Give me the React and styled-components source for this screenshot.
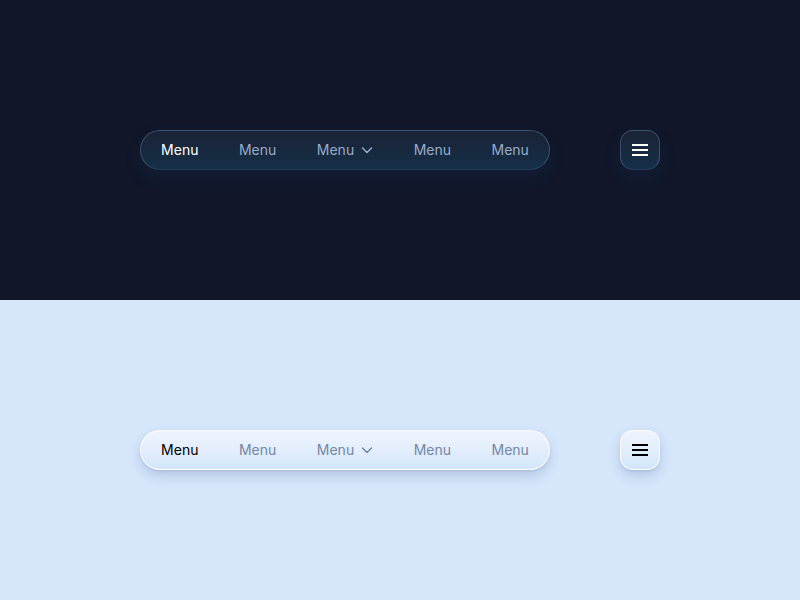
import React from "react";
import styled, { createGlobalStyle, css } from "styled-components";

const Global = createGlobalStyle`
  html, body { margin: 0; padding: 0; }
  body { font-family: Inter, "Noto Sans", sans-serif; -webkit-font-smoothing: antialiased; }
`;

const Section = styled.section`
  height: 300px;
  display: flex;
  align-items: center;
  justify-content: center;
  gap: 70px;
  background: ${(p) => (p.$dark ? "#111729" : "#d6e6fb")};
`;

const surface = (dark) =>
  dark
    ? css`
        background: linear-gradient(180deg, #1a2236 0%, #172a40 60%, #15304a 100%);
        border: 1px solid rgba(170, 190, 225, 0.26);
        border-bottom-color: rgba(120, 150, 190, 0.18);
        box-shadow: 0 8px 16px rgba(20, 60, 110, 0.18);
      `
    : css`
        background: linear-gradient(180deg, #eef4fe 0%, #e3eefc 50%, #d2e6fa 100%);
        border: 1px solid rgba(255, 255, 255, 0.9);
        box-shadow: 0 6px 12px rgba(60, 90, 150, 0.22), 0 1px 2px rgba(60, 90, 150, 0.15);
      `;

const Pill = styled.nav`
  height: 40px;
  box-sizing: border-box;
  display: flex;
  align-items: center;
  gap: 40.5px;
  padding: 0 20px;
  border-radius: 20px;
  ${(p) => surface(p.$dark)}
`;

const Item = styled.a`
  display: flex;
  align-items: center;
  gap: 7px;
  font-size: 14px;
  line-height: 20px;
  font-weight: 400;
  cursor: pointer;
  color: ${(p) =>
    p.$dark ? (p.$active ? "#ffffff" : "#98abca") : p.$active ? "#000000" : "#7487a5"};
`;

const IconButton = styled.button`
  width: 40px;
  height: 40px;
  box-sizing: border-box;
  padding: 0;
  border-radius: 13px;
  display: flex;
  align-items: center;
  justify-content: center;
  cursor: pointer;
  color: ${(p) => (p.$dark ? "#ffffff" : "#000000")};
  ${(p) => surface(p.$dark)}
`;

const Chevron = () => (
  <svg width="12" height="12" viewBox="0 0 12 12" fill="none">
    <path d="M1.5 4l4.5 4.5L10.5 4" stroke="currentColor" strokeWidth="1.5" strokeLinecap="round" strokeLinejoin="round" />
  </svg>
);

const Burger = () => (
  <svg width="16" height="12" viewBox="0 0 16 12" fill="none">
    <path d="M0 1h16M0 6h16M0 11h16" stroke="currentColor" strokeWidth="2" />
  </svg>
);

const Bar = ({ dark }) => (
  <Section $dark={dark}>
    <Pill $dark={dark}>
      <Item $dark={dark} $active>Menu</Item>
      <Item $dark={dark}>Menu</Item>
      <Item $dark={dark}>
        Menu <Chevron />
      </Item>
      <Item $dark={dark}>Menu</Item>
      <Item $dark={dark}>Menu</Item>
    </Pill>
    <IconButton $dark={dark} aria-label="Open menu">
      <Burger />
    </IconButton>
  </Section>
);

export default function App() {
  return (
    <>
      <Global />
      <Bar dark />
      <Bar />
    </>
  );
}
